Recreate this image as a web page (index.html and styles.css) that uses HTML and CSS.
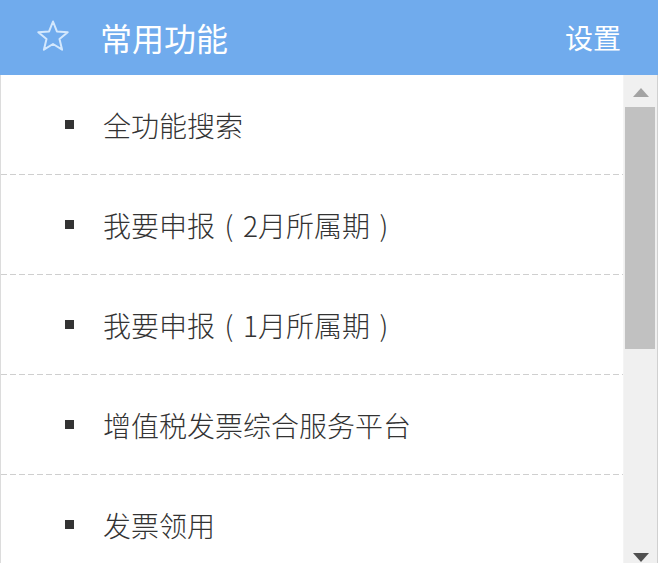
FILE: index.html
```html
<!DOCTYPE html>
<html lang="zh-CN">
<head>
<meta charset="utf-8">
<title>常用功能</title>
<link rel="stylesheet" href="styles.css">
</head>
<body>
<div class="panel">
  <div class="panel-head">
    <svg class="star" width="36" height="36" viewBox="0 0 36 36" aria-hidden="true">
      <polygon points="18,2.5 21.9,12.4 32.7,13.2 24.5,20.1 27.1,30.7 18,25 8.9,30.7 11.5,20.1 3.3,13.2 14.1,12.4" />
    </svg>
    <span class="panel-title">常用功能</span>
    <a class="panel-link">设置</a>
  </div>
  <div class="panel-body">
    <ul class="menu">
      <li class="menu-item"><i class="dot"></i><span>全功能搜索</span></li>
      <li class="menu-item"><i class="dot"></i><span>我要申报<b class="paren">(</b>2月所属期<b class="paren">)</b></span></li>
      <li class="menu-item"><i class="dot"></i><span>我要申报<b class="paren">(</b>1月所属期<b class="paren">)</b></span></li>
      <li class="menu-item"><i class="dot"></i><span>增值税发票综合服务平台</span></li>
      <li class="menu-item"><i class="dot"></i><span>发票领用</span></li>
    </ul>
    <div class="scrollbar">
      <div class="arrow arrow-up"></div>
      <div class="track"><div class="thumb"></div></div>
      <div class="arrow arrow-down"></div>
    </div>
  </div>
</div>
</body>
</html>
```

FILE: styles.css
```css
html, body {
  margin: 0;
  padding: 0;
  background: #ffffff;
}

body {
  font-family: "Noto Sans CJK SC", "Noto Sans", sans-serif;
  color: #333333;
}

.panel {
  width: 658px;
  height: 563px;
  display: flex;
  flex-direction: column;
  overflow: hidden;
}

.panel-head {
  height: 75px;
  flex: none;
  background: #70abed;
  display: flex;
  align-items: center;
  padding: 0 37px 0 35px;
  color: #ffffff;
}

.star {
  flex: none;
  margin-top: -2px;
}

.star polygon {
  fill: none;
  stroke: #d4e8fd;
  stroke-width: 2;
  stroke-linejoin: round;
}

.panel-title {
  font-size: 32px;
  margin-left: 29px;
  line-height: 1;
  margin-top: -2px;
}

.panel-link {
  margin-left: auto;
  font-size: 28px;
  line-height: 1;
  margin-top: -2px;
}

.panel-body {
  flex: 1;
  display: flex;
  min-height: 0;
  border-left: 1px solid #dcdcdc;
  border-right: 1px solid #d0d0d0;
}

.menu {
  flex: 1;
  list-style: none;
  margin: 0;
  padding: 0;
  overflow: hidden;
  border-right: 1px solid #f4f4f4;
}

.menu-item {
  height: 99px;
  display: flex;
  align-items: center;
  padding-left: 64px;
  font-size: 28px;
  font-weight: 300;
  background-image: repeating-linear-gradient(90deg, #cfcfcf 0 6px, transparent 6px 9px);
  background-size: 100% 1px;
  background-position: left bottom;
  background-repeat: no-repeat;
  padding-bottom: 1px;
}

/* brackets sit centred in a full-width cell */
.paren {
  display: inline-block;
  width: 28px;
  text-align: center;
  font-weight: 300;
}

.dot {
  width: 9px;
  height: 9px;
  background: #333333;
  margin-right: 29px;
  flex: none;
}

.scrollbar {
  width: 33px;
  flex: none;
  background: #f0f0f0;
  display: flex;
  flex-direction: column;
  align-items: center;
}

.arrow {
  width: 0;
  height: 0;
  flex: none;
  border-left: 8px solid transparent;
  border-right: 8px solid transparent;
}

.arrow-up {
  border-bottom: 9px solid #a3a3a3;
  margin: 13px 0 10px;
}

.arrow-down {
  border-top: 9px solid #505050;
  margin: 0 0 1px;
}

.track {
  flex: 1;
  align-self: stretch;
  padding: 0 2px 0 1px;
}

.thumb {
  height: 242px;
  background: #c1c1c1;
}
```
